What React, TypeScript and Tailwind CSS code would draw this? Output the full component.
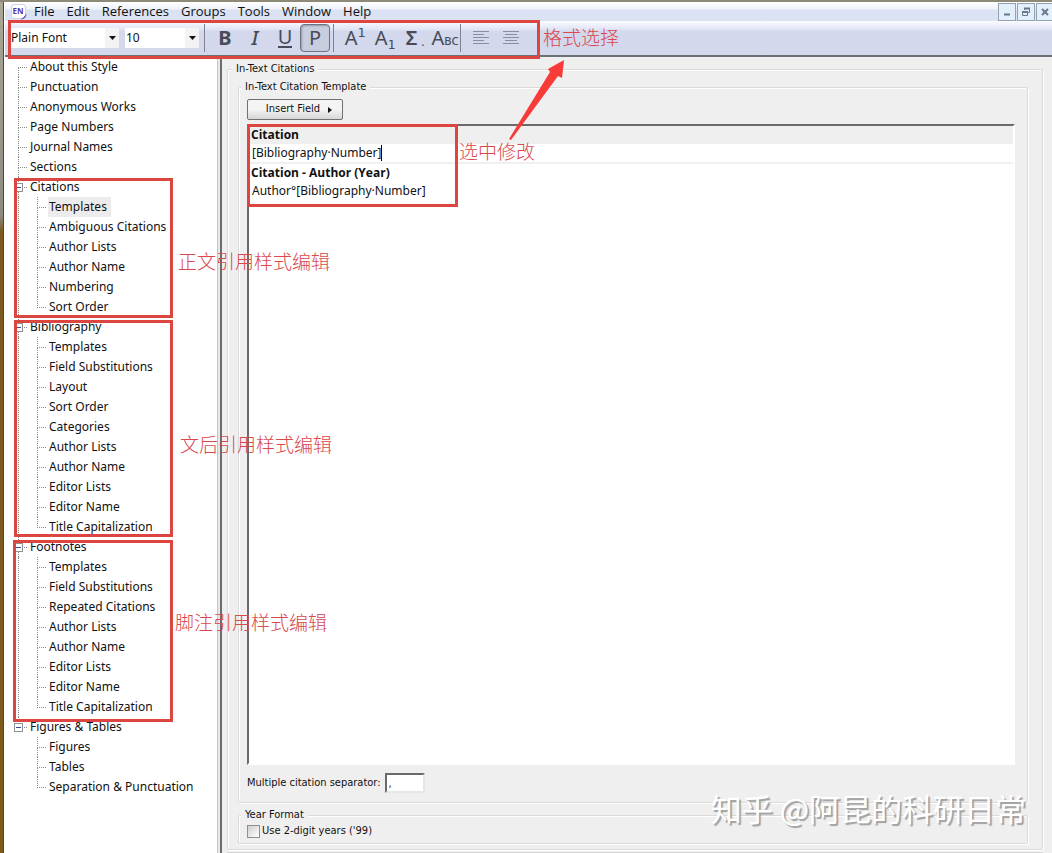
import { useState } from 'react'
import type { ReactNode } from 'react'

const menus = ['File', 'Edit', 'References', 'Groups', 'Tools', 'Window', 'Help']

const tree = [
  { label: 'About this Style' },
  { label: 'Punctuation' },
  { label: 'Anonymous Works' },
  { label: 'Page Numbers' },
  { label: 'Journal Names' },
  { label: 'Sections' },
  {
    label: 'Citations',
    children: ['Templates', 'Ambiguous Citations', 'Author Lists', 'Author Name', 'Numbering', 'Sort Order'],
  },
  {
    label: 'Bibliography',
    children: [
      'Templates',
      'Field Substitutions',
      'Layout',
      'Sort Order',
      'Categories',
      'Author Lists',
      'Author Name',
      'Editor Lists',
      'Editor Name',
      'Title Capitalization',
    ],
  },
  {
    label: 'Footnotes',
    children: [
      'Templates',
      'Field Substitutions',
      'Repeated Citations',
      'Author Lists',
      'Author Name',
      'Editor Lists',
      'Editor Name',
      'Title Capitalization',
    ],
  },
  { label: 'Figures & Tables', children: ['Figures', 'Tables', 'Separation & Punctuation'] },
]

// Dotted elbow in front of a tree label
function Branch({ first, last }: { first?: boolean; last?: boolean }) {
  return (
    <span className="flex h-5 w-[9px] shrink-0 flex-col">
      <span className={`h-[11px] border-b border-dotted border-[#8a8a8a] ${first ? '' : 'border-l'}`} />
      <span className={`flex-1 border-dotted border-[#8a8a8a] ${last ? '' : 'border-l'}`} />
    </span>
  )
}

function Tree() {
  const [selected, setSelected] = useState('Citations/Templates')
  const [closed, setClosed] = useState<string[]>([])

  const toggle = (label: string) =>
    setClosed((c) => (c.includes(label) ? c.filter((l) => l !== label) : [...c, label]))

  const item = (id: string, label: string) => (
    <button
      onClick={() => setSelected(id)}
      className={`ml-0.5 h-5 px-px pr-1 pb-px leading-[19px] whitespace-nowrap ${selected === id ? 'bg-[#ececec]' : ''}`}
    >
      {label}
    </button>
  )

  return (
    <nav className="w-[212px] shrink-0 overflow-hidden bg-white pl-[13px]">
      <ul className="font-['Noto_Sans',sans-serif] text-[12px] leading-5">
        {tree.map((node, i) => {
          const isLast = i === tree.length - 1
          const isClosed = closed.includes(node.label)
          return (
            <li key={node.label}>
              <div className="relative flex">
                <Branch first={i === 0} last={isLast} />
                {node.children && (
                  <button
                    aria-label={`Toggle ${node.label}`}
                    onClick={() => toggle(node.label)}
                    className="absolute top-1.5 -left-1 flex size-[9px] items-center justify-center border border-[#919191] bg-white"
                  >
                    <span className="h-px w-[5px] bg-[#3c4c9c]" />
                    {isClosed && <span className="absolute h-[5px] w-px bg-[#3c4c9c]" />}
                  </button>
                )}
                {item(node.label, node.label)}
              </div>
              {node.children && !isClosed && (
                <ul className={isLast ? 'pl-[19px]' : 'border-l border-dotted border-[#8a8a8a] pl-[18px]'}>
                  {node.children.map((child, j) => (
                    <li key={child} className="flex">
                      <Branch last={j === node.children.length - 1} />
                      {item(`${node.label}/${child}`, child)}
                    </li>
                  ))}
                </ul>
              )}
            </li>
          )
        })}
      </ul>
    </nav>
  )
}

function Combo({ label, options, className }: { label: string; options: string[]; className: string }) {
  return (
    <div className={`relative h-5 bg-white ${className}`}>
      <select
        aria-label={label}
        className="block h-full w-full appearance-none bg-transparent pl-px text-[12px] leading-5 outline-none"
      >
        {options.map((o) => (
          <option key={o}>{o}</option>
        ))}
      </select>
      <span className="pointer-events-none absolute inset-y-0 right-0 flex w-3.5 items-center justify-center bg-[#f3f3f3]">
        <svg width="7" height="4" viewBox="0 0 7 4">
          <path d="M0 0h7L3.5 4z" fill="#111" />
        </svg>
      </span>
    </div>
  )
}

function Tool({ label, active, children }: { label: string; active?: boolean; children: ReactNode }) {
  return (
    <button
      aria-label={label}
      className={`flex h-7 w-[30px] shrink-0 items-center justify-center text-[20px] leading-none text-[#484c58] ${
        active ? 'rounded-sm border border-[#6f7482] bg-[#c9cede] shadow-[inset_1px_1px_2px_#9298a8]' : ''
      }`}
    >
      {children}
    </button>
  )
}

function Divider({ className }: { className: string }) {
  return <span className={`h-7 w-px shrink-0 bg-[#7d8290] ${className}`} />
}

function Toolbar() {
  return (
    <div className="flex h-9 items-center border-b-2 border-[#6d7078] bg-linear-to-b from-[#fbfcff] from-0% via-[#dfe4f4] via-25% to-[#d3d8ec] to-30% pl-[5px] font-['Noto_Sans',sans-serif]">
      <Combo label="Font" options={['Plain Font', 'Arial', 'Times New Roman']} className="w-[109px]" />
      <Combo label="Font size" options={['10', '11', '12', '14']} className="ml-1.5 w-[74px]" />
      <Divider className="mx-[5px]" />
      <Tool label="Bold">
        <b>B</b>
      </Tool>
      <Tool label="Italic">
        <i className="font-medium">I</i>
      </Tool>
      <Tool label="Underline">
        <span className="border-b-2 border-[#484c58] leading-[18px]">U</span>
      </Tool>
      <Tool label="Plain" active>
        P
      </Tool>
      <Divider className="mr-[6px] ml-[3px]" />
      <Tool label="Superscript">
        <span>A</span>
        <span className="mb-3 font-['DejaVu_Sans_Mono',monospace] text-[13px]">1</span>
      </Tool>
      <Tool label="Subscript">
        <span>A</span>
        <span className="mt-3 font-['DejaVu_Sans_Mono',monospace] text-[13px]">1</span>
      </Tool>
      <Tool label="Symbol">
        <span className="font-semibold">Σ</span>
        <span className="mt-2 ml-1 text-[12px]">.</span>
      </Tool>
      <Tool label="Small caps">
        <span>A</span>
        <span className="mt-1 text-[11px] font-medium">BC</span>
      </Tool>
      <Divider className="mr-[5px]" />
      <Tool label="Align left">
        <svg width="16" height="14" viewBox="0 0 16 14" stroke="#8b8f9d">
          <path d="M0 .5h16M0 3.5h11M0 6.5h16M0 9.5h11M0 12.5h16" />
        </svg>
      </Tool>
      <Tool label="Align center">
        <svg width="16" height="14" viewBox="0 0 16 14" stroke="#8b8f9d">
          <path d="M0 .5h16M2 3.5h12M0 6.5h16M2 9.5h12M0 12.5h16" />
        </svg>
      </Tool>
    </div>
  )
}

function WindowButton({ label, children }: { label: string; children: ReactNode }) {
  return (
    <button
      aria-label={label}
      className="flex h-[18px] w-[18px] shrink-0 items-center justify-center border border-[#94a2b0] bg-[#e3effb]"
    >
      <svg width="10" height="10" viewBox="0 0 10 10" fill="none" stroke="#66788c">
        {children}
      </svg>
    </button>
  )
}

function MenuBar() {
  return (
    <header className="flex h-[19px] items-center overflow-hidden bg-linear-to-b from-white from-0% via-[#f0f3fb] via-35% to-[#dbe2f3] to-45% pl-[6px]">
      <svg width="16" height="16" viewBox="0 0 16 16" className="shrink-0">
        <rect x=".5" y=".5" width="14" height="14" rx="2.5" fill="#fff" stroke="#d5cfe8" />
        <path d="M15.500 9.500c0 3-2.500 6-6 6 2-1 4.500-3 6-6z" fill="#4f2d9c" />
        <text x="1.500" y="10" fontSize="8" fontWeight="700" fill="#5a35ad" fontFamily="Noto Sans, sans-serif">
          EN
        </text>
      </svg>
      <nav className="ml-px flex flex-1">
        {menus.map((m) => (
          <button key={m} className="px-1.5 pb-0.5 text-[13px] leading-[18px]">
            {m}
          </button>
        ))}
      </nav>
      <div className="-mr-0.5 flex gap-px">
        <WindowButton label="Minimize">
          <path d="M2 7.500h6" strokeWidth="2" />
        </WindowButton>
        <WindowButton label="Restore">
          <path d="M3.500 3V1.500h5v4H7" />
          <path d="M3 1.500h6" strokeWidth="2" />
          <path d="M1.500 4.500h5v4h-5z" />
          <path d="M1 5h6" strokeWidth="2" />
        </WindowButton>
        <WindowButton label="Close">
          <path d="M2 2l6 6M8 2l-6 6" strokeWidth="2" />
        </WindowButton>
      </div>
    </header>
  )
}

function Group({ title, className, children }: { title: string; className: string; children: ReactNode }) {
  return (
    <fieldset
      className={`min-w-0 rounded-xs border border-[#dadada] shadow-[1px_1px_0_#fff,inset_1px_1px_0_#fff] ${className}`}
    >
      <legend className="-ml-1.5 bg-[#efefef] px-1 leading-4">{title}</legend>
      {children}
    </fieldset>
  )
}

function TemplatePanel() {
  return (
    <main className="flex min-w-0 flex-1 flex-col gap-0.5 bg-[#efefef] pt-1 pr-[9px] pl-[5px] font-['DejaVu_Sans_Condensed','Noto_Sans',sans-serif] text-[11px]">
      <Group title="In-Text Citations" className="flex flex-1 flex-col gap-1 pt-0.5 pr-[14px] pb-[5px] pl-2.5">
        <Group title="In-Text Citation Template" className="flex flex-1 flex-col pt-1 pr-3 pb-[9px] pl-2">
          <button className="flex h-[21px] w-24 items-center justify-center gap-2 rounded-xs border border-[#707070] bg-linear-to-b from-[#f4f4f4] from-50% to-[#d6d6d6] pl-2">
            Insert Field
            <svg width="4" height="6" viewBox="0 0 4 6">
              <path d="M0 0l4 3-4 3z" fill="#111" />
            </svg>
          </button>
          <div className="mt-1 flex-1 border-2 border-t-[#6a6a6a] border-r-white border-b-white border-l-[#6a6a6a] bg-white font-['Noto_Sans',sans-serif] text-[12px] leading-[18px]">
            <h3 className="bg-[#efefef] pl-0.5 font-['Open_Sans',sans-serif] font-bold">Citation</h3>
            <p className="flex items-center border-b-2 border-[#f0f0f0] pl-[3px]">
              [Bibliography·Number]
              <span className="h-4 w-px bg-black" />
            </p>
            <h3 className="pl-0.5 font-['Open_Sans',sans-serif] font-bold">Citation - Author (Year)</h3>
            <p className="pl-[3px]">Author°[Bibliography·Number]</p>
          </div>
          <div className="mt-2 flex items-center gap-1">
            <label htmlFor="separator">Multiple citation separator:</label>
            <input
              id="separator"
              defaultValue=","
              className="h-5 w-10 border-2 border-t-[#6a6a6a] border-r-[#e6e6e6] border-b-[#e6e6e6] border-l-[#6a6a6a] bg-white px-0.5 outline-none"
            />
          </div>
        </Group>
        <Group title="Year Format" className="pb-1 pl-2">
          <label className="flex items-center gap-0.5 leading-4">
            <input
              type="checkbox"
              className="size-[13px] appearance-none border border-[#8e8f8f] bg-linear-to-br from-[#cfcfcf] to-white checked:bg-[#4a6fb5]"
            />
            Use 2-digit years ('99)
          </label>
        </Group>
      </Group>
      <div className="h-px shrink-0 bg-[#dadada]" />
    </main>
  )
}

const frames = [
  { id: 'toolbar', className: 'top-5 left-2 h-[39px] w-[532px]' },
  { id: 'template', className: 'top-[124px] left-[247px] h-[83px] w-[211px]' },
  { id: 'citations', className: 'top-[178px] left-[14px] h-[140px] w-[159px]' },
  { id: 'bibliography', className: 'top-80 left-[14px] h-[217px] w-[159px]' },
  { id: 'footnotes', className: 'top-[540px] left-[13px] h-[182px] w-[160px]' },
]

const notes = [
  { text: '格式选择', className: 'top-[23px] left-[543px]' },
  { text: '选中修改', className: 'top-[137px] left-[459px]' },
  { text: '正文引用样式编辑', className: 'top-[247px] left-[178px]' },
  { text: '文后引用样式编辑', className: 'top-[430px] left-[180px]' },
  { text: '脚注引用样式编辑', className: 'top-[608px] left-[175px]' },
]

// Tutorial marks drawn over the window
function Annotations() {
  return (
    <div className="pointer-events-none absolute inset-0 overflow-hidden font-['Noto_Sans_CJK_SC',sans-serif]">
      {frames.map((f) => (
        <div key={f.id} className={`absolute border-3 border-[#dc4540] ${f.className}`} />
      ))}
      {notes.map((n) => (
        <span
          key={n.text}
          className={`absolute text-[19px] leading-7 font-light whitespace-nowrap text-[#d9484c] ${n.className}`}
        >
          {n.text}
        </span>
      ))}
      <svg width="56" height="80" viewBox="0 0 56 80" className="absolute top-[60px] left-[509px]">
        <path d="M0 79L41 12l-2-3L55 0l-2 18-4-2L2 80z" fill="#f83a38" />
      </svg>
      <span className="absolute right-[26px] bottom-[21px] text-[31px] leading-12 whitespace-nowrap text-white [text-shadow:2px_2px_1px_#a0a0a0]">
        知乎 @阿昆的科研日常
      </span>
    </div>
  )
}

export default function App() {
  return (
    <div className="relative flex min-h-screen flex-col border-t-2 border-[#8d8a78] bg-white font-['Open_Sans',sans-serif] text-[#111]">
      <div className="flex flex-1">
        <div className="w-1 shrink-0 border-r border-[#4a4640] bg-linear-to-b from-[#aaa795] from-0% via-[#8f8b82] via-25% to-[#7c5a1c] to-27%" />
        <div className="flex min-w-0 flex-1 flex-col pl-px">
          <MenuBar />
          <Toolbar />
          <div className="flex flex-1">
            <Tree />
            <div className="w-[5px] shrink-0 border-r-2 border-l border-r-[#6d6d6d] border-l-[#c4c4c4] bg-[#e8e8ea]" />
            <TemplatePanel />
          </div>
        </div>
      </div>
      <div className="absolute -top-0.5 right-0 bottom-0 left-0">
        <Annotations />
      </div>
    </div>
  )
}
